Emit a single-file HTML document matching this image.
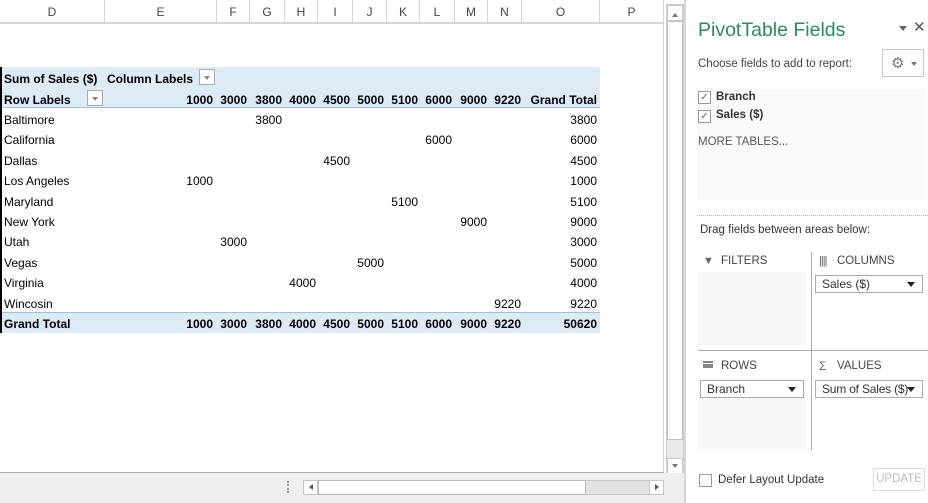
<!DOCTYPE html>
<html><head><meta charset="utf-8"><style>
*{margin:0;padding:0;box-sizing:border-box}
body{width:928px;height:503px;overflow:hidden;background:#fff;font-family:"Liberation Sans",sans-serif;font-size:12px;color:#000;position:relative}
.a{position:absolute;white-space:nowrap}
.hd{position:absolute;top:0;height:23px;line-height:24px;text-align:center;color:#444;font-size:12px;border-right:1px solid #d4d4d4}
.r{text-align:right}
.b{font-weight:bold}
.p{color:#444}
.box{position:absolute;border:1px solid #ababab;background:#fff;height:18px;font-size:12px;line-height:16px;padding-left:6px;color:#333}
.box:after{content:"";position:absolute;right:7px;top:6px;border:4px solid transparent;border-top:5px solid #222}
</style></head><body>
<div class="a" style="left:0;top:0;width:664px;height:24px;border-bottom:2px solid #d4d4d4"></div>
<div class="hd" style="left:0;width:105px">D</div>
<div class="hd" style="left:105px;width:112px">E</div>
<div class="hd" style="left:217px;width:33px">F</div>
<div class="hd" style="left:250px;width:35px">G</div>
<div class="hd" style="left:285px;width:33px">H</div>
<div class="hd" style="left:318px;width:35px">I</div>
<div class="hd" style="left:353px;width:34px">J</div>
<div class="hd" style="left:387px;width:33px">K</div>
<div class="hd" style="left:420px;width:35px">L</div>
<div class="hd" style="left:455px;width:33px">M</div>
<div class="hd" style="left:488px;width:34px">N</div>
<div class="hd" style="left:522px;width:78px">O</div>
<div class="hd" style="left:600px;width:64px">P</div>
<div class="a" style="left:663px;top:24px;width:1px;height:449px;background:#d4d4d4"></div>

<div class="a" style="left:1px;top:67px;width:599px;height:41px;background:#ddebf7;border-bottom:1px solid #9bc2e6"></div>
<div class="a" style="left:1px;top:312px;width:599px;height:21px;background:#ddebf7;border-top:1px solid #9bc2e6"></div>
<div class="a" style="left:0;top:67px;width:2px;height:266px;background:#000"></div>

<div class="a b" style="left:4px;top:72px">Sum of Sales ($)</div>
<div class="a b" style="left:107px;top:72px">Column Labels</div>
<div class="a" style="left:199px;top:69px;width:16px;height:16px;border:1px solid #aaa;background:#fff"><div style="position:absolute;left:4px;top:6px;border:3px solid transparent;border-top:4px solid #888"></div></div>
<div class="a b" style="left:4px;top:93px">Row Labels</div>
<div class="a" style="left:87px;top:90px;width:16px;height:16px;border:1px solid #aaa;background:#fff"><div style="position:absolute;left:4px;top:6px;border:3px solid transparent;border-top:4px solid #888"></div></div>

<div id="t"></div>
<script>
var R=[213,247,282,316,350,384,418,452,487,521],G=597;
var h='';
var nums=[1000,3000,3800,4000,4500,5000,5100,6000,9000,9220];
function s(x,y,t,c){h+='<div class="a r '+(c||'')+'" style="right:'+(928-x)+'px;top:'+y+'px">'+t+'</div>';}
nums.forEach(function(n,i){s(R[i],93,n,'b');s(R[i],317,n,'b');});
s(G,93,'Grand Total','b');s(G,317,'50620','b');
var rows=[['Baltimore',2],['California',7],['Dallas',4],['Los Angeles',0],['Maryland',6],['New York',8],['Utah',1],['Vegas',5],['Virginia',3],['Wincosin',9]];
rows.forEach(function(r,k){var y=113+k*20.4;h+='<div class="a" style="left:4px;top:'+y+'px">'+r[0]+'</div>';s(R[r[1]],y,nums[r[1]]);s(G,y,nums[r[1]]);});
h+='<div class="a b" style="left:4px;top:317px">Grand Total</div>';
document.getElementById('t').innerHTML=h;
</script>

<div class="a" style="left:666px;top:4px;width:18px;height:470px;background:#e9e9e9;border:1px solid #d0d0d0"></div>
<div class="a" style="left:667px;top:5px;width:16px;height:16px;background:#fff;border:1px solid #c8c8c8"><div style="position:absolute;left:4px;top:4px;border:3px solid transparent;border-bottom:4px solid #777"></div></div>
<div class="a" style="left:667px;top:21px;width:16px;height:419px;background:#fff;border:1px solid #c0c0c0"></div>
<div class="a" style="left:667px;top:458px;width:16px;height:16px;background:#fff;border:1px solid #c8c8c8"><div style="position:absolute;left:4px;top:5px;border:3px solid transparent;border-top:4px solid #777"></div></div>

<div class="a" style="left:0;top:473px;width:686px;height:30px;background:#f0f0f0"></div>
<div class="a" style="left:0;top:472px;width:664px;height:1px;background:#ababab"></div>
<div class="a" style="left:287px;top:481px;width:2px;height:12px;border-left:2px dotted #999"></div>
<div class="a" style="left:303px;top:480px;width:361px;height:15px;background:#e3e3e3;border:1px solid #c6c6c6"></div>
<div class="a" style="left:303px;top:480px;width:15px;height:15px;background:#fff;border:1px solid #c6c6c6"><div style="position:absolute;left:2px;top:3px;border:3px solid transparent;border-right:4px solid #555"></div></div>
<div class="a" style="left:318px;top:480px;width:268px;height:15px;background:#fff;border:1px solid #b8b8b8"></div>
<div class="a" style="left:649px;top:480px;width:15px;height:15px;background:#fff;border:1px solid #c6c6c6"><div style="position:absolute;left:5px;top:3px;border:3px solid transparent;border-left:4px solid #555"></div></div>

<div class="a" style="left:684px;top:0;width:2px;height:503px;background:#d6d6d6"></div>
<div class="a" style="left:686px;top:0;width:242px;height:503px;background:#fff"></div>
<div class="a" style="left:698px;top:19px;font-size:19.5px;color:#2e8b57">PivotTable Fields</div>
<div class="a" style="left:899px;top:26px;border:4px solid transparent;border-top:5px solid #666"></div>
<div class="a" style="left:913px;top:18px;font-size:15px;color:#555">✕</div>
<div class="a p" style="left:698px;top:58px;font-size:11.5px">Choose fields to add to report:</div>
<div class="a" style="left:882px;top:49px;width:42px;height:28px;border:1px solid #c8c8c8;background:#fff"><span style="position:absolute;left:8px;top:4px;font-size:15px;color:#777">⚙</span><div style="position:absolute;left:28px;top:12px;border:3px solid transparent;border-top:4px solid #777"></div></div>
<div class="a" style="left:697px;top:89px;width:228px;height:111px;background:#fafafa"></div>
<div class="a" style="left:698px;top:91px;width:13px;height:13px;border:1px solid #999;background:#fff;font-size:10px;line-height:11px;color:#666;text-align:center">✓</div>
<div class="a b" style="left:716px;top:91px;font-size:11.5px;color:#333">Branch</div>
<div class="a" style="left:698px;top:110px;width:13px;height:13px;border:1px solid #999;background:#fff;font-size:10px;line-height:11px;color:#666;text-align:center">✓</div>
<div class="a b" style="left:716px;top:109px;font-size:11.5px;color:#333">Sales ($)</div>
<div class="a p" style="left:698px;top:136px;font-size:11.5px;color:#555">MORE TABLES...</div>
<div class="a" style="left:697px;top:215px;width:231px;border-top:1px dotted #bbb"></div>
<div class="a p" style="left:700px;top:224px;font-size:11.5px;color:#333">Drag fields between areas below:</div>

<div class="a" style="left:811px;top:252px;width:1px;height:198px;background:#ababab"></div>
<div class="a" style="left:698px;top:350px;width:230px;height:1px;background:#ababab"></div>
<div class="a" style="left:698px;top:272px;width:108px;height:73px;background:#f7f7f7"></div>
<div class="a" style="left:698px;top:379px;width:108px;height:70px;background:#f7f7f7"></div>
<div class="a" style="left:703px;top:255px;font-size:11px;color:#666">▼</div>
<div class="a p" style="left:721px;top:255px;font-size:11.5px">FILTERS</div>
<div class="a" style="left:819px;top:255px;font-size:11px;color:#666;letter-spacing:-1px">||||</div>
<div class="a p" style="left:837px;top:255px;font-size:11.5px">COLUMNS</div>
<div class="a" style="left:703px;top:361px;width:10px;height:7px;border-top:2px solid #888;border-bottom:2px solid #888"><div style="margin-top:1px;height:2px;background:#888"></div></div>
<div class="a p" style="left:721px;top:360px;font-size:11.5px">ROWS</div>
<div class="a" style="left:819px;top:359px;font-size:12px;color:#666">Σ</div>
<div class="a p" style="left:837px;top:360px;font-size:11.5px">VALUES</div>
<div class="box" style="left:815px;top:275px;width:108px">Sales ($)</div>
<div class="box" style="left:700px;top:380px;width:104px">Branch</div>
<div class="box" style="left:815px;top:380px;width:108px;letter-spacing:-0.2px">Sum of Sales ($)</div>

<div class="a" style="left:699px;top:474px;width:13px;height:13px;border:1px solid #999;background:#fff"></div>
<div class="a" style="left:718px;top:474px;font-size:11.5px;color:#333">Defer Layout Update</div>
<div class="a" style="left:873px;top:468px;width:52px;height:23px;border:1px solid #ddd;color:#bbb;font-size:11.5px;line-height:21px;text-align:center">UPDATE</div>
</body></html>
